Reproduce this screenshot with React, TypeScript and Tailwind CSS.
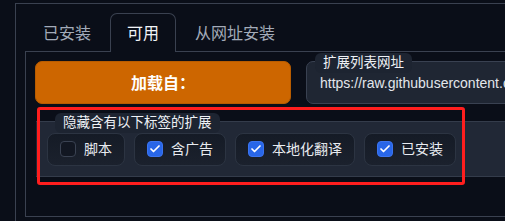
import { Check } from 'lucide-react';

const font = { fontFamily: '"Noto Sans", "Noto Sans CJK SC", sans-serif' };

const tags = [
    { label: '脚本', checked: false },
    { label: '含广告', checked: true },
    { label: '本地化翻译', checked: true },
    { label: '已安装', checked: true },
];

function TagChip({ label, checked }: { label: string; checked: boolean }) {
    return (
        <div className="flex h-[33px] shrink-0 items-center gap-2 rounded-[8px] border border-[#2c3442] bg-gradient-to-b from-[#151b26] to-[#1b212d] pl-[12px] pr-[12px]">
            <span
                className={
                    checked
                        ? 'flex h-4 w-4 items-center justify-center rounded-[4px] border border-[#3b74f0] bg-[#2866e8]'
                        : 'flex h-4 w-4 items-center justify-center rounded-[4px] border border-[#3a4252] bg-[#121722]'
                }
            >
                {checked && <Check className="h-3 w-3 text-white" strokeWidth={3.5} />}
            </span>
            <span className="text-[14px] leading-none text-[#e8ebf0]">{label}</span>
        </div>
    );
}

export default function App() {
    return (
        <div className="relative h-[221px] w-[505px] overflow-hidden bg-[#0a0e18] pl-[15px] pt-[3px]" style={font}>
            <div className="h-[260px] w-[600px] border-l border-t border-[#3a4150] pl-[9px] pt-[9px]">
                {/* tabs */}
                <div className="flex h-[39px] items-stretch pl-px">
                    <div className="flex items-center px-[17px] text-[16px] text-[#a3abb9]">已安装</div>
                    <div className="relative z-10 ml-[2px] flex items-center rounded-t-[7px] border border-b-0 border-[#3a4150] bg-[#0a0e18] px-[16px] text-[16px] text-[#f1f4f8]">
                        可用
                    </div>
                    <div className="ml-[2px] flex items-center px-[17px] text-[16px] text-[#a3abb9]">从网址安装</div>
                </div>

                {/* panel */}
                <div className="-mt-px h-[166px] border-b border-l border-t border-[#3a4150] pl-[9px] pt-[9px]">
                    <div className="flex gap-[15px]">
                        <button className="flex h-[43px] w-[256px] items-center justify-center rounded-[7px] border border-[#b85c00] bg-[#cd6600] text-[16px] font-bold text-white">
                            加载自：
                        </button>
                        <div className="relative flex h-[43px] w-[300px] items-center rounded-[7px] border border-[#394151] bg-[#1f2633] pl-[13px] pt-[2px]">
                            <span className="absolute left-[8px] top-[-9px] flex h-[20px] items-center rounded-[6px] bg-[#1d2431] px-[8px] text-[13.5px] leading-none text-[#eef1f5]">
                                扩展列表网址
                            </span>
                            <span className="whitespace-nowrap font-['Liberation_Sans',sans-serif] text-[14px] text-[#e3e6ec]">
                                https://raw.githubusercontent.com/extensions/index.json
                            </span>
                        </div>
                    </div>

                    <div className="relative ml-px mt-[17px] flex h-[56px] items-center gap-[9px] border-b border-t border-[#343c4b] bg-[#212836] pl-[11px]">
                        <span className="absolute left-[19px] top-[-9px] flex h-[20px] items-center rounded-[6px] bg-[#1d2431] px-[8px] text-[13.5px] leading-none text-[#eef1f5]">
                            隐藏含有以下标签的扩展
                        </span>
                        {tags.map((t) => (
                            <TagChip key={t.label} label={t.label} checked={t.checked} />
                        ))}
                    </div>
                </div>
            </div>

            {/* highlight annotation */}
            <div className="absolute left-[37px] top-[107px] h-[78px] w-[428px] rounded-[3px] border-[3px] border-[#ff1e1e]" />
        </div>
    );
}
